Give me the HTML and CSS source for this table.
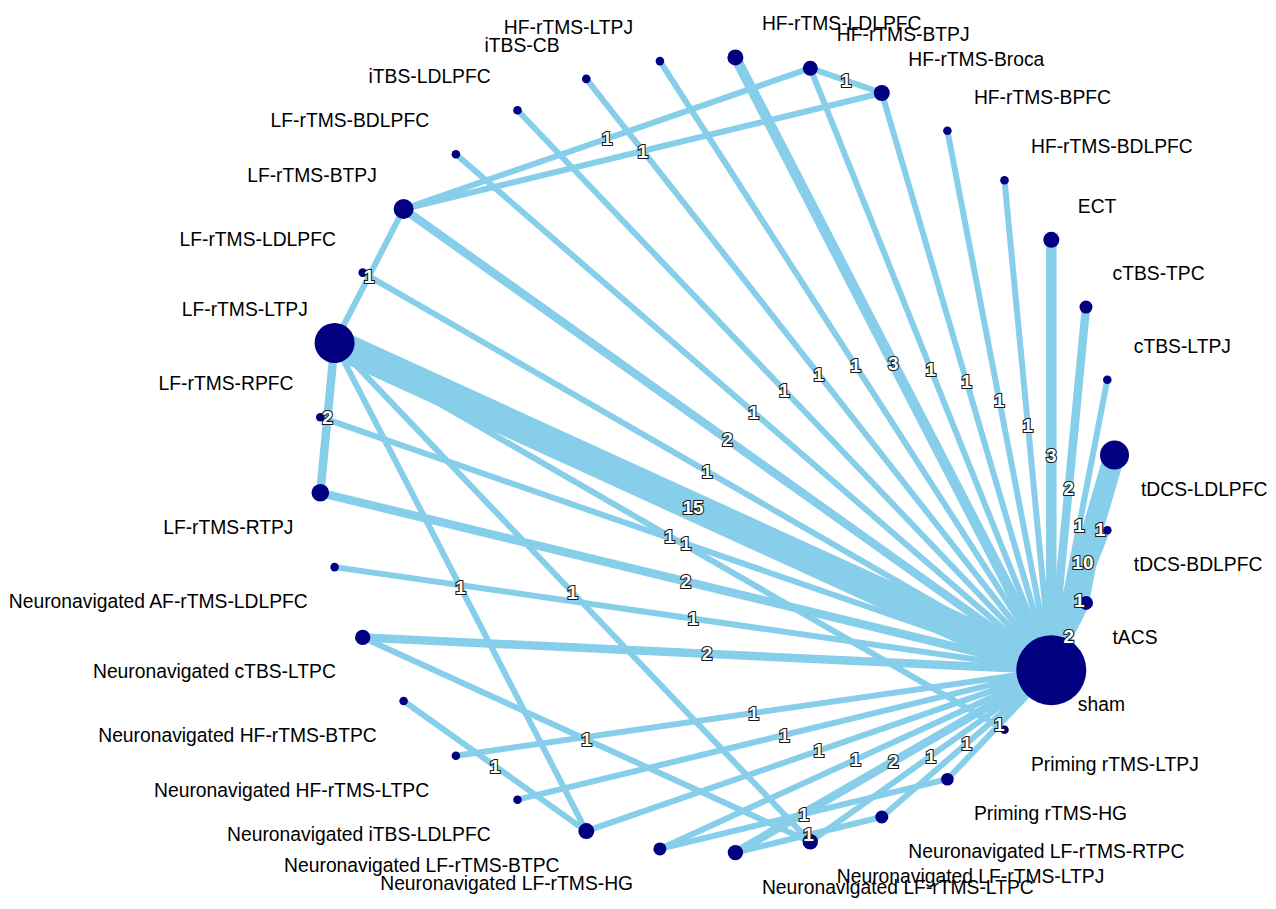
FILE: index.html
```html
<!DOCTYPE html>
<html lang="en">
<head>
<meta charset="utf-8">
<title>Network graph</title>
<link rel="stylesheet" href="styles.css">
</head>
<body>
<div class="page">
<svg class="graph" width="1276" height="909" viewBox="0 0 1276 909" xmlns="http://www.w3.org/2000/svg">
  <g class="edges">
    <!-- edges to sham (1051.3,670.2) -->
    <line class="edge w3" x1="735.4" y1="57.4" x2="1051.3" y2="670.2"/>
    <line class="edge w1" x1="810.3" y1="68.2" x2="1051.3" y2="670.2"/>
    <line class="edge w1" x1="881.8" y1="93.0" x2="1051.3" y2="670.2"/>
    <line class="edge w1" x1="947.4" y1="130.8" x2="1051.3" y2="670.2"/>
    <line class="edge w1" x1="1004.5" y1="180.3" x2="1051.3" y2="670.2"/>
    <line class="edge w3" x1="1051.3" y1="239.8" x2="1051.3" y2="670.2"/>
    <line class="edge w2" x1="1086.0" y1="307.1" x2="1051.3" y2="670.2"/>
    <line class="edge w1" x1="1107.3" y1="379.7" x2="1051.3" y2="670.2"/>
    <line class="edge w10" x1="1114.5" y1="455.0" x2="1051.3" y2="670.2"/>
    <line class="edge w1" x1="1107.3" y1="530.3" x2="1051.3" y2="670.2"/>
    <line class="edge w2" x1="1086.0" y1="602.9" x2="1051.3" y2="670.2"/>
    <line class="edge w1" x1="659.9" y1="61.1" x2="1051.3" y2="670.2"/>
    <line class="edge w1" x1="586.3" y1="78.9" x2="1051.3" y2="670.2"/>
    <line class="edge w1" x1="517.5" y1="110.3" x2="1051.3" y2="670.2"/>
    <line class="edge w1" x1="455.9" y1="154.2" x2="1051.3" y2="670.2"/>
    <line class="edge w2" x1="403.6" y1="209.0" x2="1051.3" y2="670.2"/>
    <line class="edge w1" x1="362.7" y1="272.6" x2="1051.3" y2="670.2"/>
    <line class="edge w15" x1="334.6" y1="342.9" x2="1051.3" y2="670.2"/>
    <line class="edge w1" x1="320.3" y1="417.2" x2="1051.3" y2="670.2"/>
    <line class="edge w2" x1="320.3" y1="492.8" x2="1051.3" y2="670.2"/>
    <line class="edge w1" x1="334.6" y1="567.1" x2="1051.3" y2="670.2"/>
    <line class="edge w2" x1="362.7" y1="637.4" x2="1051.3" y2="670.2"/>
    <line class="edge w1" x1="455.9" y1="755.8" x2="1051.3" y2="670.2"/>
    <line class="edge w1" x1="517.5" y1="799.7" x2="1051.3" y2="670.2"/>
    <line class="edge w1" x1="586.3" y1="831.1" x2="1051.3" y2="670.2"/>
    <line class="edge w1" x1="659.9" y1="848.9" x2="1051.3" y2="670.2"/>
    <line class="edge w2" x1="735.4" y1="852.6" x2="1051.3" y2="670.2"/>
    <line class="edge w1" x1="810.3" y1="841.8" x2="1051.3" y2="670.2"/>
    <line class="edge w1" x1="881.8" y1="817.0" x2="1051.3" y2="670.2"/>
    <line class="edge w1" x1="947.4" y1="779.2" x2="1051.3" y2="670.2"/>
    <!-- other edges -->
    <line class="edge w1" x1="810.3" y1="68.2" x2="881.8" y2="93.0"/>
    <line class="edge w1" x1="403.6" y1="209.0" x2="810.3" y2="68.2"/>
    <line class="edge w1" x1="403.6" y1="209.0" x2="881.8" y2="93.0"/>
    <line class="edge w1" x1="403.6" y1="209.0" x2="334.6" y2="342.9"/>
    <line class="edge w2" x1="334.6" y1="342.9" x2="320.3" y2="492.8"/>
    <line class="edge w1" x1="334.6" y1="342.9" x2="586.3" y2="831.1"/>
    <line class="edge w1" x1="334.6" y1="342.9" x2="1004.5" y2="729.7"/>
    <line class="edge w1" x1="334.6" y1="342.9" x2="810.3" y2="841.8"/>
    <line class="edge w1" x1="362.7" y1="637.4" x2="810.3" y2="841.8"/>
    <line class="edge w1" x1="403.6" y1="701.0" x2="586.3" y2="831.1"/>
    <line class="edge w1" x1="659.9" y1="848.9" x2="947.4" y2="779.2"/>
    <line class="edge w1" x1="735.4" y1="852.6" x2="881.8" y2="817.0"/>
    <line class="edge w1" x1="1114.5" y1="455.0" x2="1086.0" y2="602.9"/>
  </g>
  <g class="nodes">
    <circle class="node" cx="1114.5" cy="455.0" r="14.5"/>
    <circle class="node" cx="1107.3" cy="379.7" r="4.3"/>
    <circle class="node" cx="1086.0" cy="307.1" r="6.5"/>
    <circle class="node" cx="1051.3" cy="239.8" r="8"/>
    <circle class="node" cx="1004.5" cy="180.3" r="4.3"/>
    <circle class="node" cx="947.4" cy="130.8" r="4.3"/>
    <circle class="node" cx="881.8" cy="93.0" r="8"/>
    <circle class="node" cx="810.3" cy="68.2" r="7.5"/>
    <circle class="node" cx="735.4" cy="57.4" r="8"/>
    <circle class="node" cx="659.9" cy="61.1" r="4.3"/>
    <circle class="node" cx="586.3" cy="78.9" r="4.3"/>
    <circle class="node" cx="517.5" cy="110.3" r="4.3"/>
    <circle class="node" cx="455.9" cy="154.2" r="4.3"/>
    <circle class="node" cx="403.6" cy="209.0" r="10"/>
    <circle class="node" cx="362.7" cy="272.6" r="4.3"/>
    <circle class="node" cx="334.6" cy="342.9" r="20"/>
    <circle class="node" cx="320.3" cy="417.2" r="4.3"/>
    <circle class="node" cx="320.3" cy="492.8" r="8.8"/>
    <circle class="node" cx="334.6" cy="567.1" r="4.3"/>
    <circle class="node" cx="362.7" cy="637.4" r="7.7"/>
    <circle class="node" cx="403.6" cy="701.0" r="4.3"/>
    <circle class="node" cx="455.9" cy="755.8" r="4.3"/>
    <circle class="node" cx="517.5" cy="799.7" r="4.3"/>
    <circle class="node" cx="586.3" cy="831.1" r="8"/>
    <circle class="node" cx="659.9" cy="848.9" r="6.5"/>
    <circle class="node" cx="735.4" cy="852.6" r="7.7"/>
    <circle class="node" cx="810.3" cy="841.8" r="7.7"/>
    <circle class="node" cx="881.8" cy="817.0" r="6.5"/>
    <circle class="node" cx="947.4" cy="779.2" r="6.3"/>
    <circle class="node" cx="1004.5" cy="729.7" r="4.3"/>
    <circle class="node" cx="1051.3" cy="670.2" r="35"/>
    <circle class="node" cx="1086.0" cy="602.9" r="7"/>
    <circle class="node" cx="1107.3" cy="530.3" r="4.3"/>
  </g>
  <g class="nlabels">
    <text class="nlabel start" x="1141" y="496">tDCS-LDLPFC</text>
    <text class="nlabel start" x="1133.8" y="352.7">cTBS-LTPJ</text>
    <text class="nlabel start" x="1112.5" y="280.1">cTBS-TPC</text>
    <text class="nlabel start" x="1077.8" y="212.8">ECT</text>
    <text class="nlabel start" x="1031" y="153.3">HF-rTMS-BDLPFC</text>
    <text class="nlabel start" x="973.9" y="103.8">HF-rTMS-BPFC</text>
    <text class="nlabel start" x="908.3" y="66">HF-rTMS-Broca</text>
    <text class="nlabel start" x="836.8" y="41.2">HF-rTMS-BTPJ</text>
    <text class="nlabel start" x="761.9" y="30.4">HF-rTMS-LDLPFC</text>
    <text class="nlabel end" x="633.1" y="34.1">HF-rTMS-LTPJ</text>
    <text class="nlabel end" x="559.5" y="51.9">iTBS-CB</text>
    <text class="nlabel end" x="490.7" y="83.3">iTBS-LDLPFC</text>
    <text class="nlabel end" x="429.1" y="127.2">LF-rTMS-BDLPFC</text>
    <text class="nlabel end" x="376.8" y="182">LF-rTMS-BTPJ</text>
    <text class="nlabel end" x="335.9" y="245.6">LF-rTMS-LDLPFC</text>
    <text class="nlabel end" x="307.8" y="316.4">LF-rTMS-LTPJ</text>
    <text class="nlabel end" x="293.5" y="390.2">LF-rTMS-RPFC</text>
    <text class="nlabel end" x="293.5" y="533.8">LF-rTMS-RTPJ</text>
    <text class="nlabel end" x="307.8" y="608.1">Neuronavigated AF-rTMS-LDLPFC</text>
    <text class="nlabel end" x="335.9" y="678.4">Neuronavigated cTBS-LTPC</text>
    <text class="nlabel end" x="376.8" y="742">Neuronavigated HF-rTMS-BTPC</text>
    <text class="nlabel end" x="429.1" y="796.8">Neuronavigated HF-rTMS-LTPC</text>
    <text class="nlabel end" x="490.7" y="840.7">Neuronavigated iTBS-LDLPFC</text>
    <text class="nlabel end" x="559.5" y="872.1">Neuronavigated LF-rTMS-BTPC</text>
    <text class="nlabel end" x="633.1" y="889.9">Neuronavigated LF-rTMS-HG</text>
    <text class="nlabel start" x="761.9" y="893.6">Neuronavigated LF-rTMS-LTPC</text>
    <text class="nlabel start" x="836.8" y="882.8">Neuronavigated LF-rTMS-LTPJ</text>
    <text class="nlabel start" x="908.3" y="858">Neuronavigated LF-rTMS-RTPC</text>
    <text class="nlabel start" x="973.9" y="820.2">Priming rTMS-HG</text>
    <text class="nlabel start" x="1031" y="770.7">Priming rTMS-LTPJ</text>
    <text class="nlabel start" x="1077.8" y="711.2">sham</text>
    <text class="nlabel start" x="1112.5" y="643.9">tACS</text>
    <text class="nlabel start" x="1133.8" y="571.3">tDCS-BDLPFC</text>
  </g>
  <g class="elabels">
    <text class="elabel" x="893.4" y="363.8">3</text>
    <text class="elabel" x="930.8" y="369.2">1</text>
    <text class="elabel" x="966.6" y="381.6">1</text>
    <text class="elabel" x="999.4" y="400.5">1</text>
    <text class="elabel" x="1027.9" y="425.3">1</text>
    <text class="elabel" x="1051.3" y="455">3</text>
    <text class="elabel" x="1068.7" y="488.7">2</text>
    <text class="elabel" x="1079.3" y="525">1</text>
    <text class="elabel" x="1082.9" y="562.6">10</text>
    <text class="elabel" x="1079.3" y="600.3">1</text>
    <text class="elabel" x="1068.7" y="636.6">2</text>
    <text class="elabel" x="855.6" y="365.7">1</text>
    <text class="elabel" x="818.8" y="374.6">1</text>
    <text class="elabel" x="784.4" y="390.3">1</text>
    <text class="elabel" x="753.6" y="412.2">1</text>
    <text class="elabel" x="727.5" y="439.6">2</text>
    <text class="elabel" x="707" y="471.4">1</text>
    <text class="elabel" x="693" y="507">15</text>
    <text class="elabel" x="685.8" y="543.7">1</text>
    <text class="elabel" x="685.8" y="581.5">2</text>
    <text class="elabel" x="693" y="618.7">1</text>
    <text class="elabel" x="707" y="653.8">2</text>
    <text class="elabel" x="753.6" y="713">1</text>
    <text class="elabel" x="784.4" y="735">1</text>
    <text class="elabel" x="818.8" y="750.7">1</text>
    <text class="elabel" x="855.6" y="759.6">1</text>
    <text class="elabel" x="893.4" y="761.4">2</text>
    <text class="elabel" x="930.8" y="756">1</text>
    <text class="elabel" x="966.6" y="743.6">1</text>
    <text class="elabel" x="999.4" y="724.7">1</text>
    <text class="elabel" x="846.1" y="80.6">1</text>
    <text class="elabel" x="607" y="138.6">1</text>
    <text class="elabel" x="642.7" y="151">1</text>
    <text class="elabel" x="369.1" y="276">1</text>
    <text class="elabel" x="327.5" y="417.9">2</text>
    <text class="elabel" x="460.5" y="587">1</text>
    <text class="elabel" x="669.6" y="536.3">1</text>
    <text class="elabel" x="572.5" y="592.4">1</text>
    <text class="elabel" x="586.5" y="739.6">1</text>
    <text class="elabel" x="495" y="766.1">1</text>
    <text class="elabel" x="803.7" y="814.1">1</text>
    <text class="elabel" x="808.6" y="834.8">1</text>
    <text class="elabel" x="1100.3" y="529">1</text>
  </g>
</svg>
</div>
</body>
</html>
```

FILE: styles.css
```css
html, body {
  margin: 0;
  padding: 0;
  background: #ffffff;
}

.page {
  width: 1276px;
  height: 909px;
  overflow: hidden;
  background: #ffffff;
}

.graph {
  display: block;
}

.edge {
  stroke: #87ceeb;
  stroke-linecap: butt;
  fill: none;
}

.w1 { stroke-width: 6; }
.w2 { stroke-width: 8.5; }
.w3 { stroke-width: 10.5; }
.w10 { stroke-width: 21; }
.w15 { stroke-width: 29; }

.node {
  fill: #000080;
}

.nlabel {
  font-family: "Liberation Sans", Arial, sans-serif;
  font-size: 19.3px;
  fill: #000000;
}

.nlabel.start { text-anchor: start; }
.nlabel.end { text-anchor: end; }

.elabel {
  font-family: "Liberation Sans", Arial, sans-serif;
  font-size: 19px;
  font-weight: bold;
  fill: #ffffff;
  stroke: #1a1a1a;
  stroke-width: 2.2;
  paint-order: stroke;
  text-anchor: middle;
  dominant-baseline: central;
}
```
